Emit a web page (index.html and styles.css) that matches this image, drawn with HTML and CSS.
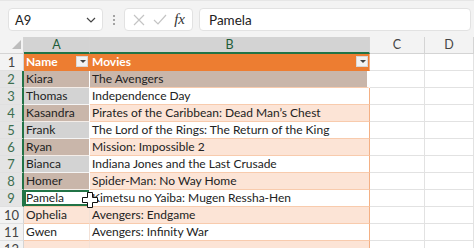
FILE: index.html
```html
<!DOCTYPE html>
<html lang="en">
<head>
  <meta charset="UTF-8">
  <meta name="viewport" content="width=device-width, initial-scale=1.0">
  <title>Movies sheet</title>
  <link rel="stylesheet" href="styles.css">
</head>
<body>
  <!-- Formula bar -->
  <div class="topbar">
    <div class="name-box">
      <span>A9</span>
      <svg class="chevron" width="10" height="6" viewBox="0 0 10 6"><path d="M1 1l4 4 4-4" fill="none" stroke="#444" stroke-width="1.2"/></svg>
    </div>
    <svg class="dots" width="4" height="12" viewBox="0 0 4 12"><circle cx="2" cy="2" r="1" fill="#888"/><circle cx="2" cy="6" r="1" fill="#888"/><circle cx="2" cy="10" r="1" fill="#888"/></svg>
    <div class="fx-box">
      <svg width="12" height="12" viewBox="0 0 12 12"><path d="M1 1l10 10M11 1L1 11" stroke="#c4c4c4" stroke-width="1.2"/></svg>
      <svg width="14" height="11" viewBox="0 0 14 11"><path d="M1 6l4 4 8-9" fill="none" stroke="#c4c4c4" stroke-width="1.2"/></svg>
      <span class="fx">fx</span>
    </div>
    <div class="formula-input">Pamela</div>
  </div>

  <!-- Grid -->
  <div class="sheet">
    <div class="corner"><svg width="9" height="9" viewBox="0 0 9 9"><path d="M9 0v9H0z" fill="#bdbdbd"/></svg></div>
    <div class="col-head active">A</div>
    <div class="col-head active">B</div>
    <div class="col-head">C</div>
    <div class="col-head">D</div>

    <div class="row-head">1</div>
    <div class="cell head-cell">Name<span class="drop"></span></div>
    <div class="cell head-cell tb-end">Movies<span class="drop"></span></div>
    <div class="cell"></div><div class="cell"></div>

    <div class="row-head sel">2</div>
    <div class="cell t band sel-band">Kiara</div>
    <div class="cell t band sel-band tb-end">The Avengers</div>
    <div class="cell"></div><div class="cell"></div>

    <div class="row-head sel">3</div>
    <div class="cell t sel-white">Thomas</div>
    <div class="cell t tb-end">Independence Day</div>
    <div class="cell"></div><div class="cell"></div>

    <div class="row-head sel">4</div>
    <div class="cell t band sel-band">Kasandra</div>
    <div class="cell t band tb-end">Pirates of the Caribbean: Dead Man’s Chest</div>
    <div class="cell"></div><div class="cell"></div>

    <div class="row-head sel">5</div>
    <div class="cell t sel-white">Frank</div>
    <div class="cell t tb-end">The Lord of the Rings: The Return of the King</div>
    <div class="cell"></div><div class="cell"></div>

    <div class="row-head sel">6</div>
    <div class="cell t band sel-band">Ryan</div>
    <div class="cell t band tb-end">Mission: Impossible 2</div>
    <div class="cell"></div><div class="cell"></div>

    <div class="row-head sel">7</div>
    <div class="cell t sel-white">Bianca</div>
    <div class="cell t tb-end">Indiana Jones and the Last Crusade</div>
    <div class="cell"></div><div class="cell"></div>

    <div class="row-head sel">8</div>
    <div class="cell t band sel-band">Homer</div>
    <div class="cell t band tb-end">Spider-Man: No Way Home</div>
    <div class="cell"></div><div class="cell"></div>

    <div class="row-head sel">9</div>
    <div class="cell t current">Pamela</div>
    <div class="cell t tb-end">Kimetsu no Yaiba: Mugen Ressha-Hen</div>
    <div class="cell"></div><div class="cell"></div>

    <div class="row-head">10</div>
    <div class="cell t band">Ophelia</div>
    <div class="cell t band tb-end">Avengers: Endgame</div>
    <div class="cell"></div><div class="cell"></div>

    <div class="row-head">11</div>
    <div class="cell t">Gwen</div>
    <div class="cell t tb-end">Avengers: Infinity War</div>
    <div class="cell"></div><div class="cell"></div>

    <div class="row-head">12</div>
    <div class="cell t band"></div>
    <div class="cell t band tb-end"></div>
    <div class="cell"></div><div class="cell"></div>

    <!-- Mouse cursor over the grid -->
    <svg class="cursor" width="16" height="16" viewBox="0 0 16 16"><path d="M5.5 0.5h5v5h5v5h-5v5h-5v-5h-5v-5h5z" fill="#fff" stroke="#111" stroke-width="1"/></svg>
  </div>
</body>
</html>
```

FILE: styles.css
```css
body {
  margin: 0;
  font-family: 'Lato', 'Liberation Sans', sans-serif;
  background-color: #fff;
  color: #222;
  overflow: hidden;
}

/* Barra de fórmulas */
.topbar {
  height: 37px;
  background-color: #f3f3f3;
  display: flex;
  align-items: flex-start;
  padding: 7px 3px 0 8px;
  box-sizing: border-box;
  border-top: 1px solid #e6e6e6;
}

.name-box,
.fx-box,
.formula-input {
  height: 23px;
  background-color: #fff;
  border: 1px solid #e2e2e2;
  border-radius: 4px;
  box-sizing: border-box;
  display: flex;
  align-items: center;
}

.name-box {
  width: 95px;
  padding: 0 6px 0 6px;
  justify-content: space-between;
  font-size: 13px;
}

.dots {
  margin: 6px 8px 0 9px;
}

.fx-box {
  width: 69px;
  padding: 0 7px 0 8px;
  justify-content: space-between;
}

.fx {
  font-family: 'Liberation Serif', serif;
  font-style: italic;
  font-size: 15px;
  color: #333;
}

.formula-input {
  margin-left: 6px;
  flex: 1;
  padding-left: 9px;
  font-size: 13.5px;
}

/* Hoja */
.sheet {
  position: relative;
  display: grid;
  grid-template-columns: 24px 66px 280px 55px 1fr;
  grid-auto-rows: 17px;
  font-size: 12px;
}

.corner {
  background-color: #f3f3f3;
  border-bottom: 1px solid #d4d4d4;
  border-right: 1px solid #d4d4d4;
  display: flex;
  align-items: flex-end;
  justify-content: flex-end;
  padding: 0 2px 4px 0;
}

.col-head {
  background-color: #f3f3f3;
  border-bottom: 1px solid #d4d4d4;
  border-right: 1px solid #d4d4d4;
  text-align: center;
  line-height: 16px;
  font-size: 12.5px;
  color: #444;
}

.col-head.active {
  background-color: #d3d3d3;
  color: #1d5c38;
  border-bottom: 2px solid #217346;
  line-height: 15px;
}

.row-head {
  background-color: #f3f3f3;
  border-bottom: 1px solid #e0e0e0;
  border-right: 1px solid #d4d4d4;
  text-align: center;
  font-size: 13px;
  line-height: 16px;
  color: #444;
}

.row-head.sel {
  background-color: #e4e4e4;
  color: #3c6e4f;
  border-right: 2px solid #217346;
}

.cell {
  border-bottom: 1px solid #e2e2e2;
  border-right: 1px solid #e2e2e2;
  padding-left: 2px;
  line-height: 16px;
  white-space: nowrap;
  overflow: hidden;
  position: relative;
}

/* Tabla */
.head-cell {
  background-color: #ed7d31;
  color: #fff;
  font-weight: bold;
  border-bottom-color: #ed7d31;
  border-right-color: #ed7d31;
}

.drop {
  position: absolute;
  right: 1px;
  top: 2px;
  width: 12px;
  height: 11px;
  background-color: #f2f2f2;
  border: 1px solid #d8d8d8;
  box-sizing: border-box;
}

.drop::after {
  content: '';
  position: absolute;
  left: 3px;
  top: 3px;
  border-left: 3px solid transparent;
  border-right: 3px solid transparent;
  border-top: 3px solid #444;
}

.t {
  border-bottom-color: #f8cbad;
  border-right-color: #f3e1d6;
}

.band {
  background-color: #fce4d6;
}

.tb-end {
  border-right-color: #f4b084;
}

.sel-band {
  background-color: #c9b6aa;
  border-bottom-color: #f4ede8;
  border-right-color: #fff;
}

.sel-white {
  background-color: #d3d3d3;
  border-bottom-color: #f4f4f4;
  border-right-color: #fff;
}

.tb-end.sel-band {
  border-right: 3px solid #fff;
  border-bottom-color: #f8cbad;
}

.current {
  background-color: #fff;
  box-shadow: inset 0 0 0 2px #217346;
  border-right-color: #fff;
}

.cursor {
  position: absolute;
  left: 82px;
  top: 155px;
}
```
